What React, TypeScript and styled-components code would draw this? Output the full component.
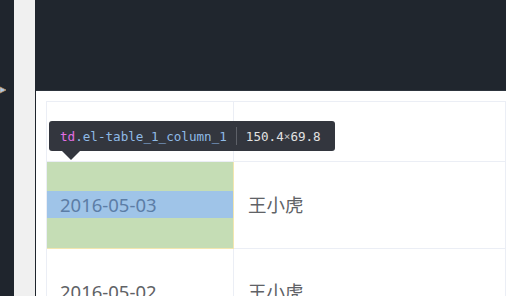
import React from "react";
import styled, { createGlobalStyle } from "styled-components";

const Global = createGlobalStyle`
  html, body { margin: 0; padding: 0; background: #ffffff; }
  body { font-family: "Noto Sans", "Noto Sans CJK SC", sans-serif; }
`;

const Page = styled.div`
  display: flex;
  width: 506px;
  height: 296px;
  overflow: hidden;
`;

const SideDark = styled.div`
  width: 14px;
  flex: none;
  background: #1f252d;
  padding-top: 86px;
  box-sizing: border-box;
  svg { display: block; }
`;

const SideGray = styled.div`
  width: 21px;
  flex: none;
  background: #f0f0f0;
`;

const Main = styled.div`
  flex: 1;
  display: flex;
  flex-direction: column;
  border-left: 1px solid #1f252d;
  min-width: 0;
`;

const TopBar = styled.div`
  height: 90px;
  flex: none;
  background: #20262e;
  border-bottom: 1px solid #2d343d;
`;

const Content = styled.div`
  position: relative;
  flex: 1;
  background: #ffffff;
  padding: 10px 0 0 10px;
`;

const Table = styled.div`
  border-left: 1px solid #ebeef5;
  border-top: 1px solid #ebeef5;
`;

const Row = styled.div<{ $h: number }>`
  display: flex;
  height: ${(p) => p.$h}px;
  border-bottom: 1px solid #ebeef5;
`;

const Cell = styled.div<{ $first?: boolean; $active?: boolean }>`
  box-sizing: content-box;
  width: ${(p) => (p.$first ? "186px" : "auto")};
  flex: ${(p) => (p.$first ? "none" : "1")};
  border-right: 1px solid ${(p) => (p.$active ? "#f3e6b0" : "#ebeef5")};
  padding-top: 29px;
  background: ${(p) => (p.$active ? "#c5ddb5" : "transparent")};
  ${(p) => (p.$active ? "margin-bottom: -1px; border-bottom: 1px solid #f3e6b0;" : "")}
`;

const CellText = styled.div<{ $active?: boolean; $pad: number }>`
  height: 27px;
  line-height: 27px;
  padding-left: ${(p) => p.$pad}px;
  font-size: 18.5px;
  color: ${(p) => (p.$active ? "#5c7da6" : "#606266")};
  background: ${(p) => (p.$active ? "#9fc4e8" : "transparent")};
  white-space: nowrap;
`;

const Tip = styled.div`
  position: absolute;
  left: 13px;
  top: 30px;
  width: 286px;
  height: 30px;
  box-sizing: border-box;
  background: #33363e;
  border-radius: 3px;
  display: flex;
  align-items: center;
  padding-left: 11px;
  font-family: "DejaVu Sans Mono", "Liberation Mono", monospace;
  font-size: 12.6px;
  white-space: nowrap;
`;

const TipArrow = styled.div`
  position: absolute;
  left: 13px;
  top: 100%;
  width: 0;
  height: 0;
  border-left: 9px solid transparent;
  border-right: 9px solid transparent;
  border-top: 9px solid #33363e;
`;

const Tag = styled.span`
  color: #e26fe3;
`;

const ClassName = styled.span`
  color: #8fbae6;
`;

const Sep = styled.span`
  width: 1px;
  height: 18px;
  background: #5d6068;
  margin: 0 9px 0 9px;
`;

const Dim = styled.span`
  color: #e2e2e2;
`;

const Times = styled.span`
  color: #c4c4c4;
  font-size: 11px;
`;

export default function App() {
  return (
    <>
      <Global />
      <Page>
        <SideDark>
          <svg width="7" height="8" viewBox="0 0 7 8">
            <path d="M0 1 L6 4 L0 7 Z" fill="#a9c9ea" stroke="#c9975e" strokeWidth="0.8" />
          </svg>
        </SideDark>
        <SideGray />
        <Main>
          <TopBar />
          <Content>
            <Table>
              <Row $h={59}>
                <Cell $first />
                <Cell />
              </Row>
              <Row $h={86}>
                <Cell $first $active>
                  <CellText $active $pad={13}>2016-05-03</CellText>
                </Cell>
                <Cell>
                  <CellText $pad={14}>王小虎</CellText>
                </Cell>
              </Row>
              <Row $h={86}>
                <Cell $first>
                  <CellText $pad={13}>2016-05-02</CellText>
                </Cell>
                <Cell>
                  <CellText $pad={14}>王小虎</CellText>
                </Cell>
              </Row>
            </Table>
            <Tip>
              <Tag>td</Tag>
              <ClassName>.el-table_1_column_1</ClassName>
              <Sep />
              <Dim>150.4</Dim>
              <Times>×</Times>
              <Dim>69.8</Dim>
              <TipArrow />
            </Tip>
          </Content>
        </Main>
      </Page>
    </>
  );
}
